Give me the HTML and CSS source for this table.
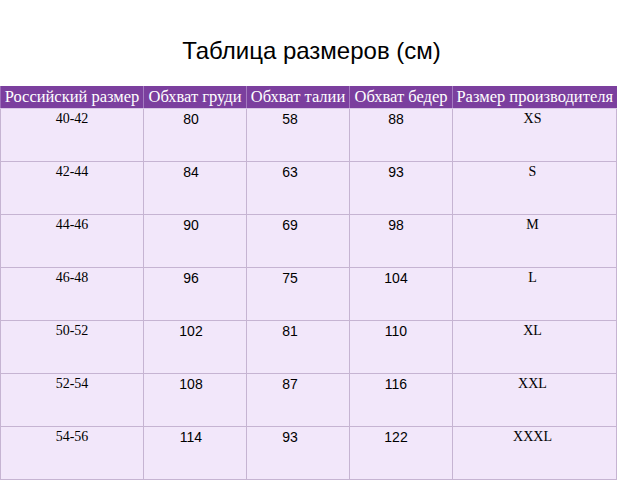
FILE: index.html
```html
<!DOCTYPE html>
<html lang="ru">
<head>
<meta charset="utf-8">
<link rel="stylesheet" href="styles.css">
</head>
<body>
<div class="page">
  <h1 class="title">Таблица размеров (см)</h1>
  <table class="sizes">
    <colgroup>
      <col class="c1"><col class="c2"><col class="c3"><col class="c4"><col class="c5">
    </colgroup>
    <thead>
      <tr>
        <th>Российский размер</th>
        <th>Обхват груди</th>
        <th>Обхват талии</th>
        <th>Обхват бедер</th>
        <th>Размер производителя</th>
      </tr>
    </thead>
    <tbody>
      <tr><td class="ru">40-42</td><td class="n n2">80</td><td class="n n3">58</td><td class="n n4">88</td><td class="mf">XS</td></tr>
      <tr><td class="ru">42-44</td><td class="n n2">84</td><td class="n n3">63</td><td class="n n4">93</td><td class="mf">S</td></tr>
      <tr><td class="ru">44-46</td><td class="n n2">90</td><td class="n n3">69</td><td class="n n4">98</td><td class="mf">M</td></tr>
      <tr><td class="ru">46-48</td><td class="n n2">96</td><td class="n n3">75</td><td class="n n4">104</td><td class="mf">L</td></tr>
      <tr><td class="ru">50-52</td><td class="n n2">102</td><td class="n n3">81</td><td class="n n4">110</td><td class="mf">XL</td></tr>
      <tr><td class="ru">52-54</td><td class="n n2">108</td><td class="n n3">87</td><td class="n n4">116</td><td class="mf">XXL</td></tr>
      <tr><td class="ru">54-56</td><td class="n n2">114</td><td class="n n3">93</td><td class="n n4">122</td><td class="mf">XXXL</td></tr>
    </tbody>
  </table>
</div>
</body>
</html>
```

FILE: styles.css
```css
html, body {
  margin: 0;
  padding: 0;
  background: #ffffff;
}

.page {
  width: 623px;
  display: flex;
  flex-direction: column;
}

.title {
  margin: 0;
  height: 86px;
  box-sizing: border-box;
  padding-top: 37px;
  text-align: center;
  font-family: "Liberation Sans", Arial, sans-serif;
  font-weight: normal;
  font-size: 24px;
  line-height: 27px;
  color: #000000;
}

.sizes {
  border-collapse: collapse;
  table-layout: fixed;
  width: 616px;
  margin-left: 0;
}

.c1 { width: 143px; }
.c2 { width: 103px; }
.c3 { width: 103px; }
.c4 { width: 103px; }
.c5 { width: 164px; }

.sizes th {
  height: 22px;
  padding: 0;
  background: #7b3f9e;
  color: #ffffff;
  font-family: "Liberation Serif", "Times New Roman", serif;
  font-weight: normal;
  font-size: 16.5px;
  line-height: 22px;
  white-space: nowrap;
  text-align: center;
  border-left: 1px solid #a47ac0;
  border-bottom: 1px solid #d9c6e6;
}

.sizes th:first-child { border-left: 1px solid #9b6cb8; }

.sizes td {
  height: 53px;
  box-sizing: border-box;
  padding: 2px 0 0 0;
  vertical-align: top;
  text-align: center;
  background: #f2e7fa;
  border: 1px solid #c6b4d2;
  color: #000000;
  font-size: 14px;
  line-height: 16px;
}

.ru, .mf {
  font-family: "Liberation Serif", "Times New Roman", serif;
}

.n {
  font-family: "Liberation Sans", Arial, sans-serif;
  font-size: 13px;
}

.n2 { padding-right: 8px !important; }
.n3 { padding-right: 16px !important; }
.n4 { padding-right: 10px !important; }
.mf { padding-right: 4px !important; }
```
